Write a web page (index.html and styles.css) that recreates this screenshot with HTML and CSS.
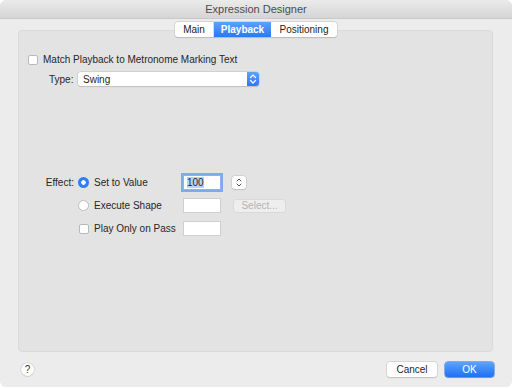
FILE: index.html
```html
<!DOCTYPE html>
<html>
<head>
<meta charset="utf-8">
<link rel="stylesheet" href="styles.css">
</head>
<body>
<div class="window">
  <div class="titlebar">Expression Designer</div>
  <div class="content">
    <div class="tabs">
      <div class="seg">
        <span class="tab t-main">Main</span>
        <span class="tab t-play active">Playback</span>
        <span class="tab t-pos">Positioning</span>
      </div>
    </div>
    <div class="box">
      <div class="row-check">
        <span class="checkbox"></span>
        <span class="lbl">Match Playback to Metronome Marking Text</span>
      </div>
      <div class="row-type">
        <span class="type-lbl">Type:</span>
        <div class="popup">
          <span class="popup-text">Swing</span>
          <span class="popup-step">
            <svg width="12" height="14" viewBox="0 0 12 14"><path d="M3.5 5.5 L6 3 L8.5 5.5 M3.5 8.5 L6 11 L8.5 8.5" fill="none" stroke="#fff" stroke-width="1.2" stroke-linecap="round" stroke-linejoin="round"/></svg>
          </span>
        </div>
      </div>
      <div class="effect">
        <span class="eff-lbl">Effect:</span>
        <div class="opt"><span class="radio on"></span><span>Set to Value</span></div>
        <div class="field focus"><span class="sel">100</span></div>
        <div class="extra">
          <span class="stepper">
            <svg width="14" height="13" viewBox="0 0 14 13"><path d="M5 5 L7 3 L9 5 M5 8 L7 10 L9 8" fill="none" stroke="#555" stroke-width="1" stroke-linecap="round" stroke-linejoin="round"/></svg>
          </span>
        </div>

        <span></span>
        <div class="opt"><span class="radio"></span><span>Execute Shape</span></div>
        <div class="field"></div>
        <div class="extra"><span class="btn-disabled">Select...</span></div>

        <span></span>
        <div class="opt"><span class="checkbox small"></span><span>Play Only on Pass</span></div>
        <div class="field"></div>
        <span></span>
      </div>
    </div>
    <div class="footer">
      <span class="help">?</span>
      <div class="buttons">
        <span class="btn">Cancel</span>
        <span class="btn primary">OK</span>
      </div>
    </div>
  </div>
</div>
</body>
</html>
```

FILE: styles.css
```css
* { box-sizing: border-box; }
html, body { margin: 0; padding: 0; background: #ffffff; }
body {
  font-family: "Liberation Sans", Arial, sans-serif;
  font-size: 10px;
  color: #262626;
}
.window {
  width: 512px;
  height: 387px;
  background: #ececec;
  border-radius: 6px;
  overflow: hidden;
  display: flex;
  flex-direction: column;
}
.titlebar {
  height: 19px;
  line-height: 19px;
  text-align: center;
  font-size: 11px;
  color: #4c4c4c;
  background: linear-gradient(#ebebeb, #d5d5d5);
  border-bottom: 1px solid #c9c9c9;
}
.content {
  padding: 3px 19px 0 18px;
  display: flex;
  flex-direction: column;
}
.tabs {
  display: flex;
  justify-content: center;
  margin-bottom: -7px;
  position: relative;
  z-index: 2;
  padding-left: 1px;
}
.seg {
  display: flex;
  height: 15px;
  background: #fff;
  border-radius: 3px;
  box-shadow: 0 0 0 0.5px #c2c2c2, 0 0.5px 1px rgba(0,0,0,0.2);
  overflow: hidden;
}
.tab {
  display: flex;
  align-items: center;
  justify-content: center;
  height: 15px;
  color: #222;
  border-right: 1px solid #dcdcdc;
}
.tab:last-child { border-right: none; }
.t-main { width: 39px; }
.t-play { width: 57px; }
.t-pos { width: 66px; }
.tab.active {
  background: linear-gradient(#5aa2fb, #2a78f6);
  color: #fff;
  font-weight: bold;
  border-right: none;
}
.box {
  height: 322px;
  background: #e3e3e3;
  border: 1px solid #dadada;
  border-radius: 4px;
  padding: 23px 0 0 9px;
  display: flex;
  flex-direction: column;
}
.row-check {
  display: flex;
  align-items: center;
  height: 11px;
}
.checkbox {
  width: 10px;
  height: 10px;
  background: #fff;
  border: 1px solid #b9b9b9;
  border-radius: 2px;
  flex: none;
}
.row-check .lbl { margin-left: 5px; }
.row-type {
  display: flex;
  align-items: center;
  margin-top: 7px;
  padding-left: 21px;
}
.type-lbl { width: 29px; }
.popup {
  width: 181px;
  height: 14px;
  background: #fff;
  border-radius: 3px;
  box-shadow: 0 0 0 0.5px #c4c4c4, 0 0.5px 1px rgba(0,0,0,0.18);
  display: flex;
  align-items: center;
  justify-content: space-between;
  overflow: hidden;
}
.popup-text { padding-left: 5px; }
.popup-step {
  width: 12px;
  height: 14px;
  background: linear-gradient(#5ca3fb, #2b79f6);
  display: flex;
}
.effect {
  margin-top: 89px;
  margin-left: -9px;
  display: grid;
  grid-template-columns: 55px 109px 38px auto;
  grid-auto-rows: 15px;
  row-gap: 8px;
  align-items: center;
}
.eff-lbl { text-align: right; }
.opt {
  display: flex;
  align-items: center;
  padding-left: 4px;
}
.opt span:last-child { margin-left: 5px; }
.radio {
  width: 11px;
  height: 11px;
  border-radius: 50%;
  background: #fff;
  border: 1px solid #bdbdbd;
  flex: none;
}
.radio.on {
  border: none;
  background: radial-gradient(circle, #fff 0 2px, #2f7ff7 2.5px);
}
.checkbox.small { margin-left: 1px; }
.field {
  height: 15px;
  background: #fff;
  border: 1px solid #cfcfcf;
  display: flex;
  align-items: center;
  padding-left: 3px;
}
.field.focus {
  box-shadow: 0 0 0 2px #7fa9ee;
  border-color: #8fb2ee;
}
.sel { background: #b4d4fb; line-height: 11px; }
.extra { padding-left: 11px; display: flex; align-items: center; }
.stepper {
  width: 14px;
  height: 13px;
  background: #fff;
  border-radius: 3px;
  box-shadow: 0 0 0 0.5px #c4c4c4, 0 0.5px 1px rgba(0,0,0,0.18);
  display: flex;
}
.btn-disabled {
  width: 53px;
  height: 14px;
  margin-left: 1px;
  background: #eeeeee;
  border: 1px solid #d9d9d9;
  border-radius: 3px;
  color: #b3b3b3;
  display: flex;
  align-items: center;
  justify-content: center;
}
.footer {
  display: flex;
  align-items: center;
  justify-content: space-between;
  margin-top: 10px;
  height: 15px;
}
.help {
  width: 13px;
  height: 13px;
  margin-left: 3px;
  border-radius: 50%;
  background: #fff;
  box-shadow: 0 0 0 0.5px #c8c8c8, 0 0.5px 1px rgba(0,0,0,0.2);
  display: flex;
  align-items: center;
  justify-content: center;
  font-size: 10px;
  color: #333;
}
.buttons { display: flex; gap: 8px; margin-right: -1px; }
.btn {
  width: 50px;
  height: 15px;
  background: #fff;
  border-radius: 3px;
  box-shadow: 0 0 0 0.5px #c4c4c4, 0 0.5px 1px rgba(0,0,0,0.2);
  display: flex;
  align-items: center;
  justify-content: center;
  color: #262626;
}
.btn.primary {
  width: 49px;
  background: linear-gradient(#5ca3fb, #1f70f5);
  color: #fff;
  box-shadow: 0 0 0 0.5px #2a6fe0, 0 0.5px 1px rgba(0,0,0,0.2);
}
```
